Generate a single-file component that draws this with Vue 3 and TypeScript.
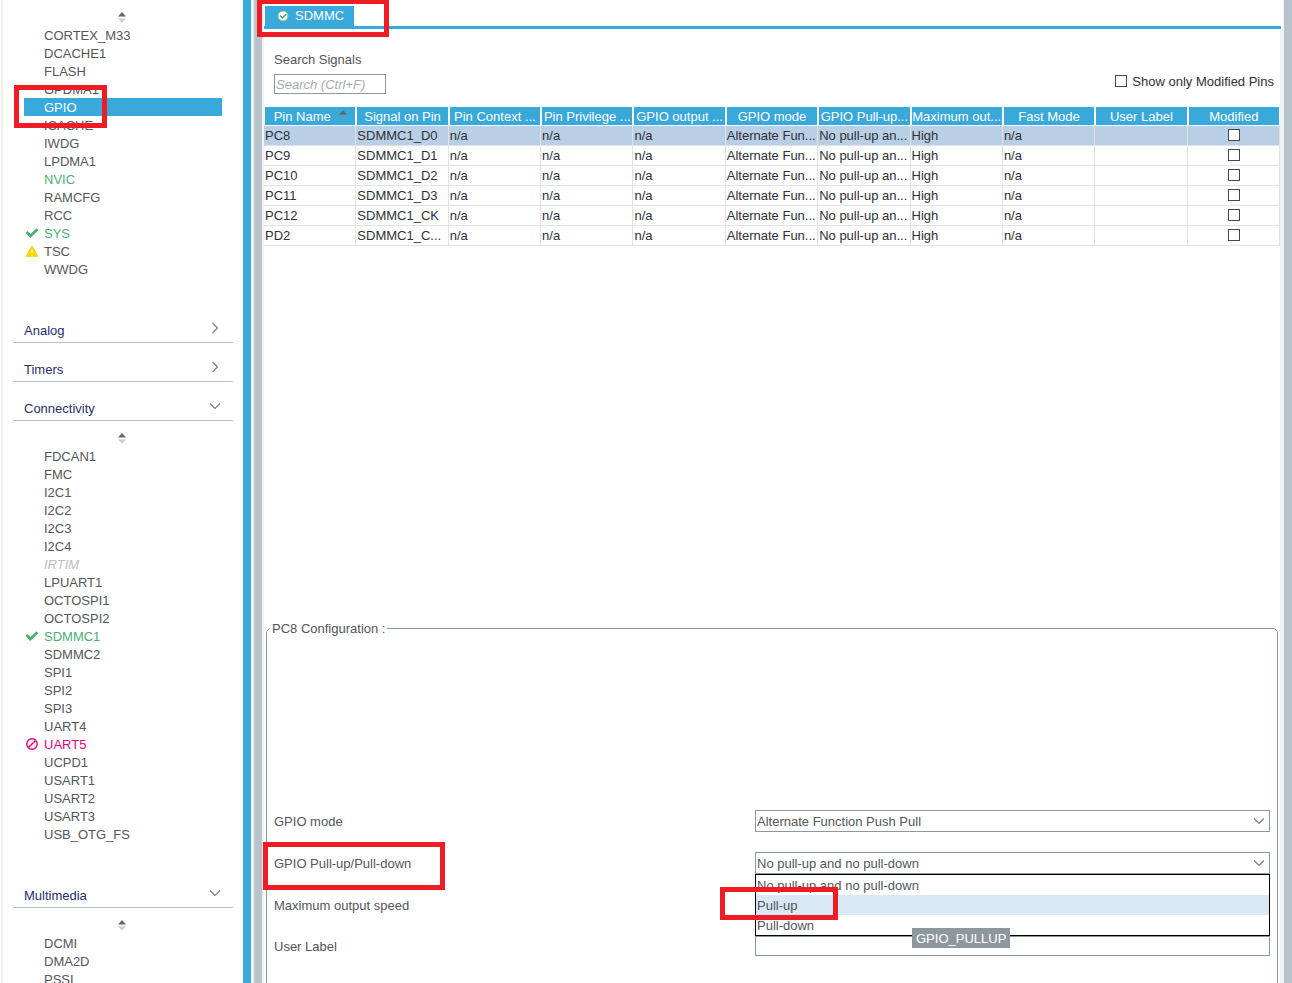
<script setup lang="ts">
import { ref } from 'vue'

type Status = 'ok' | 'warn' | 'blocked' | 'green' | 'off'
interface Peripheral {
  name: string
  status?: Status
  selected?: boolean
}
interface Section {
  title: string
  open: boolean
  items: Peripheral[]
}
interface Pin {
  name: string
  signal: string
}

const plain = (...names: string[]): Peripheral[] => names.map((name) => ({ name }))

const sections: Section[] = [
  {
    title: '',
    open: true,
    items: [
      ...plain('CORTEX_M33', 'DCACHE1', 'FLASH', 'GPDMA1'),
      { name: 'GPIO', selected: true },
      ...plain('ICACHE', 'IWDG', 'LPDMA1'),
      { name: 'NVIC', status: 'green' },
      ...plain('RAMCFG', 'RCC'),
      { name: 'SYS', status: 'ok' },
      { name: 'TSC', status: 'warn' },
      ...plain('WWDG'),
    ],
  },
  { title: 'Analog', open: false, items: [] },
  { title: 'Timers', open: false, items: [] },
  {
    title: 'Connectivity',
    open: true,
    items: [
      ...plain('FDCAN1', 'FMC', 'I2C1', 'I2C2', 'I2C3', 'I2C4'),
      { name: 'IRTIM', status: 'off' },
      ...plain('LPUART1', 'OCTOSPI1', 'OCTOSPI2'),
      { name: 'SDMMC1', status: 'ok' },
      ...plain('SDMMC2', 'SPI1', 'SPI2', 'SPI3', 'UART4'),
      { name: 'UART5', status: 'blocked' },
      ...plain('UCPD1', 'USART1', 'USART2', 'USART3', 'USB_OTG_FS'),
    ],
  },
  { title: 'Multimedia', open: true, items: plain('DCMI', 'DMA2D', 'PSSI') },
]

const columns = [
  'Pin Name', 'Signal on Pin', 'Pin Context ...', 'Pin Privilege ...',
  'GPIO output ...', 'GPIO mode', 'GPIO Pull-up...', 'Maximum out...',
  'Fast Mode', 'User Label', 'Modified',
]

const pins: Pin[] = [
  { name: 'PC8', signal: 'SDMMC1_D0' },
  { name: 'PC9', signal: 'SDMMC1_D1' },
  { name: 'PC10', signal: 'SDMMC1_D2' },
  { name: 'PC11', signal: 'SDMMC1_D3' },
  { name: 'PC12', signal: 'SDMMC1_CK' },
  { name: 'PD2', signal: 'SDMMC1_C...' },
]

const pinCells = (pin: Pin): string[] => [
  pin.name, pin.signal, 'n/a', 'n/a', 'n/a', 'Alternate Fun...',
  'No pull-up an...', 'High', 'n/a', '',
]

const pulls = ['No pull-up and no pull-down', 'Pull-up', 'Pull-down']
const search = ref('')
const onlyModified = ref(false)
const pull = ref(pulls[0])
const mode = ref('Alternate Function Push Pull')
const speed = ref('High')
const userLabel = ref('')
</script>

<template>
  <div class="shell">
    <nav class="sidebar" aria-label="Peripherals">
      <section v-for="(s, i) in sections" :key="i" class="group">
        <button v-if="s.title" type="button" class="group-head" :aria-expanded="s.open">
          <span class="group-title">{{ s.title }}</span>
          <svg v-if="s.open" class="chev" width="12" height="12" viewBox="0 0 12 12"><path d="M1 3.5 L6 8.5 L11 3.5" /></svg>
          <svg v-else class="chev" width="12" height="12" viewBox="0 0 12 12"><path d="M3.5 1 L8.5 6 L3.5 11" /></svg>
        </button>
        <template v-if="s.open">
          <button type="button" class="sorter" aria-label="Sort">
            <svg width="8" height="11" viewBox="0 0 8 11">
              <path d="M4 0 L8 4.5 H0 Z" fill="#66676a" />
              <path d="M0 6.5 H8 L4 10.5 Z" fill="#cccccc" />
            </svg>
          </button>
          <ul class="items">
            <li v-for="p in s.items" :key="p.name" :class="[p.status, { selected: p.selected }]">
              <span class="status">
                <svg v-if="p.status === 'ok'" width="14" height="12" viewBox="0 0 14 12"><path d="M1.6 5 L5.4 9 L12.4 2.2" fill="none" stroke="#4bb071" stroke-width="2.8" /></svg>
                <svg v-else-if="p.status === 'warn'" width="14" height="12" viewBox="0 0 14 12">
                  <path d="M7 1.4 L12.8 11.2 H1.2 Z" fill="#ffd200" stroke="#ffd200" stroke-width="1.2" stroke-linejoin="round" />
                  <path d="M7 4.5 V8 M7 9.2 V10.4" stroke="#fff" stroke-width="1.2" />
                </svg>
                <svg v-else-if="p.status === 'blocked'" width="14" height="12" viewBox="0 0 14 12" fill="none" stroke="#e6007e" stroke-width="1.4">
                  <circle cx="7" cy="6" r="5.2" /><path d="M3.4 9.6 L10.6 2.4" />
                </svg>
              </span>
              <a href="#">{{ p.name }}</a>
              <span v-if="p.selected" class="mark mark-item"></span>
            </li>
          </ul>
        </template>
      </section>
    </nav>
    <div class="splitter"></div>
    <div class="gutter"></div>

    <main class="main">
      <div class="tabs" role="tablist">
        <button type="button" role="tab" aria-selected="true" class="tab">
          <svg width="12" height="12" viewBox="0 0 12 12">
            <circle cx="6" cy="6" r="5" fill="#fff" stroke="#7cc08f" stroke-width="1" />
            <path d="M3.3 5.8 L5.4 7.9 L9 4.2" fill="none" stroke="#3fa864" stroke-width="1.5" />
          </svg>
          SDMMC
        </button>
        <span class="mark mark-tab"></span>
      </div>

      <div class="body">
        <div class="tools">
          <div class="search">
            <label for="search">Search Signals</label>
            <input id="search" v-model="search" type="text" placeholder="Search (Ctrl+F)" />
          </div>
          <div class="only">
            <input id="only" v-model="onlyModified" type="checkbox" class="box" />
            <label for="only">Show only Modified Pins</label>
          </div>
        </div>

        <div class="table-area">
          <table>
            <thead>
              <tr>
                <th v-for="(c, i) in columns" :key="c" scope="col">
                  <div class="th">
                    <span>{{ c }}</span>
                    <svg v-if="i === 0" width="8" height="11" viewBox="0 0 8 11">
                      <path d="M4 0 L8 4.5 H0 Z" fill="#66676a" />
                      <path d="M0 6.5 H8 L4 10.5 Z" fill="#5b9fc4" />
                    </svg>
                  </div>
                </th>
              </tr>
            </thead>
            <tbody>
              <tr v-for="(pin, r) in pins" :key="pin.name" :class="{ current: r === 0 }">
                <td v-for="(cell, c) in pinCells(pin)" :key="c">{{ cell }}</td>
                <td class="check"><input type="checkbox" class="box" :aria-label="pin.name + ' modified'" /></td>
              </tr>
            </tbody>
          </table>
        </div>

        <fieldset class="config">
          <legend>PC8 Configuration :</legend>
          <div class="form">
            <label for="mode">GPIO mode</label>
            <div class="combo">
              <select id="mode" v-model="mode"><option>Alternate Function Push Pull</option></select>
              <svg class="chev" width="12" height="12" viewBox="0 0 12 12"><path d="M1 3.5 L6 8.5 L11 3.5" /></svg>
            </div>

            <div class="marked">
              <label for="pull">GPIO Pull-up/Pull-down</label>
              <span class="mark mark-label"></span>
            </div>
            <div class="combo">
              <select id="pull" v-model="pull"><option v-for="p in pulls" :key="p">{{ p }}</option></select>
              <svg class="chev" width="12" height="12" viewBox="0 0 12 12"><path d="M1 3.5 L6 8.5 L11 3.5" /></svg>
              <ul class="popup" role="listbox" aria-label="Pull options">
                <li v-for="(p, i) in pulls" :key="p" role="option" :aria-selected="i === 1" :class="{ hover: i === 1 }">{{ p }}</li>
              </ul>
              <span class="mark mark-option"></span>
              <span class="tip" role="tooltip">GPIO_PULLUP</span>
            </div>

            <label for="speed">Maximum output speed</label>
            <div class="combo">
              <select id="speed" v-model="speed"><option>High</option></select>
            </div>

            <label for="ulabel">User Label</label>
            <input id="ulabel" v-model="userLabel" type="text" class="text" />
          </div>
        </fieldset>
      </div>
    </main>
    <div class="edge"></div>
  </div>
</template>

<style>
body {
  margin: 0;
  background: #fff;
}
</style>

<style scoped>
* {
  box-sizing: border-box;
}
.shell {
  display: flex;
  height: 100vh;
  overflow: hidden;
  font: 13px/18px "Liberation Sans", Arial, sans-serif;
  color: #53565a;
}
button,
input,
select {
  font: inherit;
  color: inherit;
  margin: 0;
}
button {
  border: 0;
  padding: 0;
  background: none;
}
ul {
  list-style: none;
  margin: 0;
  padding: 0;
}
.sidebar {
  flex: 0 0 243px;
  padding: 0 10px 0 12px;
  border-left: 1px solid #fff;
  box-shadow: inset 2px 0 #f0f0f2;
  overflow: hidden;
}
.group-head {
  display: flex;
  justify-content: space-between;
  align-items: center;
  width: 100%;
  height: 39px;
  padding: 14px 12px 0 11px;
  border-bottom: 1px solid #b7c3ca;
  color: #1f2f6b;
}
.group-title {
  padding-top: 2px;
}
.group-head .chev {
  margin-bottom: 4px;
}
.chev {
  fill: none;
  stroke: #7b7e82;
  stroke-width: 1.2;
}
.sorter {
  display: flex;
  justify-content: center;
  align-items: center;
  width: 100%;
  height: 26px;
  padding: 8px 2px 0 0;
}
.items {
  margin: 0 11px 26px;
}
.items li {
  position: relative;
  display: flex;
  height: 18px;
  line-height: 20px;
}
.items a {
  color: inherit;
  text-decoration: none;
}
.status {
  display: flex;
  align-items: center;
  width: 20px;
  padding-left: 1px;
}
.items .selected {
  background: #39a9dc;
  color: #fff;
}
.items .ok,
.items .green {
  color: #4bb071;
}
.items .blocked {
  color: #e6007e;
}
.items .off {
  color: #bcbec0;
  font-style: italic;
}
.splitter {
  flex: 0 0 11px;
  background: #39a9dc;
  border-right: 3px solid #f0f2f4;
}
.gutter {
  flex: 0 0 10px;
  background: #b7c3ca;
  border-right: 2px solid #f0f2f4;
}
.edge {
  flex: 0 0 8px;
  background: #b7c3ca;
}
.main {
  flex: 1;
  min-width: 0;
  display: flex;
  flex-direction: column;
  border-right: 1px solid #f0f2f4;
}
.tabs {
  position: relative;
  height: 29px;
  margin-right: 2px;
  padding: 6px 1px 0;
  border-bottom: 3px solid #39a9dc;
}
.tab {
  display: flex;
  align-items: center;
  gap: 6px;
  height: 20px;
  padding: 0 10px 0 12px;
  background: #39a9dc;
  color: #fff;
}
.body {
  flex: 1;
  display: flex;
  flex-direction: column;
  border-right: 3px solid #f0f2f4;
}
.tools {
  display: flex;
  justify-content: space-between;
  align-items: flex-end;
  height: 65px;
  padding: 0 6px 0 10px;
}
.search {
  display: flex;
  flex-direction: column;
  gap: 5px;
}
.search input {
  width: 112px;
  height: 20px;
  padding: 0 1px;
  border: 1px solid #8f979e;
}
.search input::placeholder {
  color: #a9abae;
  font-style: italic;
  opacity: 1;
}
.only {
  display: flex;
  align-items: center;
  gap: 5px;
  margin-bottom: 3px;
  color: #2f3136;
}
.only label {
  padding-top: 2px;
}
.box {
  appearance: none;
  display: block;
  width: 12px;
  height: 12px;
  border: 1px solid #45474b;
  background: #fff;
}
.table-area {
  flex: 0 0 525px;
  padding-top: 13px;
}
table {
  width: 100%;
  table-layout: fixed;
  border-collapse: separate;
  border-spacing: 0;
  color: #2f3136;
}
th {
  padding: 0 1px 1px;
  font-weight: normal;
}
.th {
  display: flex;
  justify-content: center;
  gap: 8px;
  height: 18px;
  line-height: 20px;
  background: #39a9dc;
  color: #fff;
  white-space: nowrap;
}
.th svg {
  margin-top: 3px;
}
td {
  height: 20px;
  padding: 0 0 0 1px;
  line-height: 19px;
  border-right: 1px solid #e0e3e5;
  border-bottom: 1px solid #e0e3e5;
  white-space: nowrap;
}
.current td {
  background: #b8cfe5;
}
.check {
  padding-top: 3px;
  vertical-align: top;
}
.check .box {
  margin: 0 auto;
}
.config {
  flex: 1;
  min-width: 0;
  margin: 0 2px -12px;
  padding: 0 3px;
  border: 1px solid #8f979e;
  border-radius: 5px;
}
legend {
  padding: 2px 2px 0;
  line-height: 16px;
}
.form {
  display: grid;
  grid-template-columns: minmax(0, 481fr) minmax(0, 515fr);
  row-gap: 20px;
  align-items: center;
  padding: 173px 4px 0;
}
.form label {
  display: block;
  padding-top: 2px;
}
.marked,
.combo {
  position: relative;
}
.combo select {
  display: block;
  appearance: none;
  width: 100%;
  height: 22px;
  padding: 2px 1px 0;
  border: 1px solid #8f979e;
  border-radius: 0;
  background: #fff;
}
.combo .chev {
  position: absolute;
  right: 5px;
  top: 5px;
}
.text {
  width: 100%;
  height: 20px;
  border: 1px solid #8f979e;
}
.popup {
  position: absolute;
  z-index: 1;
  top: 100%;
  left: 0;
  right: 0;
  border: 1px solid #000;
  background: #fff;
}
.popup li {
  height: 20px;
  padding: 0 1px;
  line-height: 22px;
}
.popup .hover {
  background: #d8e8f5;
}
.tip {
  position: absolute;
  z-index: 2;
  top: 76px;
  left: 157px;
  height: 20px;
  padding: 0 4px;
  line-height: 21px;
  background: #8f979e;
  color: #fff;
}
.mark {
  position: absolute;
  z-index: 3;
  border: 5px solid #ee1c25;
  pointer-events: none;
}
.mark-item {
  top: -13px;
  left: -10px;
  width: 93px;
  height: 43px;
}
.mark-tab {
  top: -1px;
  left: -7px;
  width: 132px;
  height: 38px;
}
.mark-label {
  top: -11px;
  left: -11px;
  width: 182px;
  height: 48px;
}
.mark-option {
  top: 35px;
  left: -35px;
  width: 118px;
  height: 33px;
}
</style>
